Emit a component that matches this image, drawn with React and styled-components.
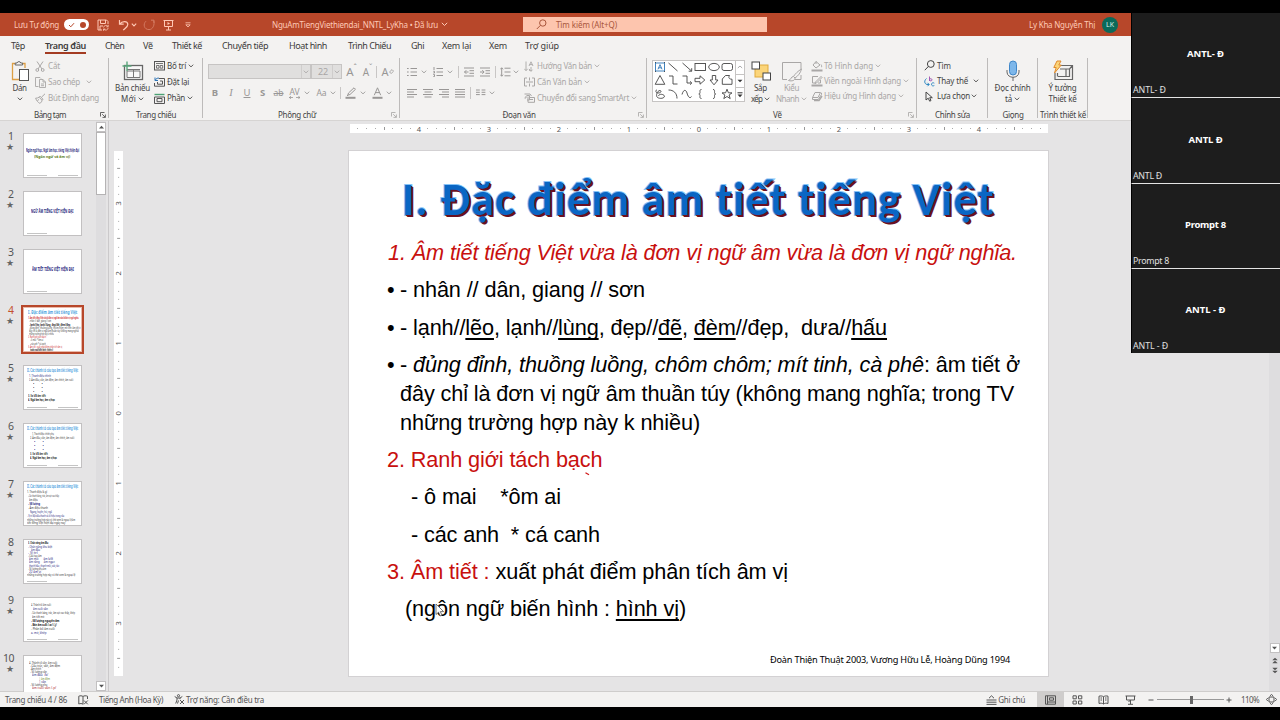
import React, { useLayoutEffect, useRef } from 'react'
import styled, { createGlobalStyle } from 'styled-components'

// Label that spreads its letters so it takes exactly `w` pixels,
// or narrows the glyphs themselves when `squeeze` is set
function Fit({ w, squeeze, children, ...rest }) {
    const ref = useRef(null)
    useLayoutEffect(() => {
        const el = ref.current
        el.style.letterSpacing = '0px'
        const natural = el.offsetWidth
        if (squeeze) {
            el.style.transform = `scaleX(${w / natural})`
            el.style.marginRight = w - natural + 'px'
        } else {
            el.style.letterSpacing = (w - el.getBoundingClientRect().width) / el.textContent.length + 'px'
        }
    }, [w, squeeze, children])
    return <FitText ref={ref} {...rest}>{children}</FitText>
}

const Chevron = ({ light }) => (
    <svg width="6" height="4" viewBox="0 0 6 4" fill="none" stroke="currentColor" strokeWidth={light ? 0.9 : 1.1}>
        <path d="M0.8 0.7L3 2.9L5.2 0.7" />
    </svg>
)

const Icon = ({ w = 12, h = 12, children, ...rest }) => (
    <svg width={w} height={h} viewBox={`0 0 ${w} ${h}`} fill="none" stroke="currentColor" strokeWidth="1" {...rest}>
        {children}
    </svg>
)

const tabs = [
    ['Tệp', 14, 11], ['Trang đầu', 41, 20], ['Chèn', 19, 19], ['Vẽ', 10, 19], ['Thiết kế', 30, 19],
    ['Chuyển tiếp', 46, 20], ['Hoạt hình', 38, 21], ['Trình Chiếu', 43, 21], ['Ghi', 13, 20],
    ['Xem lại', 29, 18], ['Xem', 18, 18], ['Trợ giúp', 34, 18],
]

function TitleBar() {
    return (
        <TitleRow>
            <QuickAccess>
                <Fit w={45}>Lưu Tự động</Fit>
                <Toggle>
                    <Icon w={7} h={6} stroke="#b7472a"><path d="M1 3L2.8 4.8L6 1.2" /></Icon>
                    <Knob />
                </Toggle>
                <Icon w={12} h={12}>
                    <path d="M1 1H9.5L11 2.5V5M1 1V11H5M3.5 1V4.5H8.5V1M3 11V7H6" />
                    <path d="M6.5 8.5A2.5 2.5 0 0 1 11 7.5M11.2 8.8A2.5 2.5 0 0 1 6.8 10.2M11.2 5.8V7.8H9.3M6.5 11.8V10H8.3" strokeWidth="0.8" />
                </Icon>
                <Spacer $w={9} />
                <Icon w={11} h={12}><path d="M1.5 1V5.2H5.7M1.7 5C4 1.8 9.8 1.5 9.8 5.5C9.8 8 7 9.2 5.2 11.2" strokeWidth="1.2" /></Icon>
                <Spacer $w={2} />
                <Chevron />
                <Spacer $w={6} />
                <Dim><Icon w={12} h={12}><path d="M8 1.2H11V4M10.6 1.6C12 5.5 10 10.6 6 10.6C1 10.6 -0.3 5 3 2.2" /></Icon></Dim>
                <Spacer $w={8} />
                <Icon w={11} h={12}>
                    <path d="M0.5 1.5H10.5M1.5 1.5V7.5H9.5V1.5M5.5 7.5V11M3 11H8" />
                    <path d="M4.5 3L7 4.5L4.5 6Z" fill="currentColor" stroke="none" />
                </Icon>
                <Spacer $w={11} />
                <Icon w={6} h={6}><path d="M0.5 0.8H5.5M0.8 2.8L3 5L5.2 2.8Z" strokeWidth="0.8" /></Icon>
            </QuickAccess>
            <FileName>
                <Fit w={166}>NguAmTiengViethiendai_NNTL_LyKha • Đã lưu</Fit>
                <Spacer $w={3} />
                <Icon w={7} h={5}><path d="M0.8 0.8L3.5 3.5L6.2 0.8" /></Icon>
            </FileName>
            <Search>
                <Icon w={11} h={11}><circle cx="6.8" cy="4" r="3.2" /><path d="M4.5 6.3L0.8 10" /></Icon>
                <Fit w={61}>Tìm kiếm (Alt+Q)</Fit>
            </Search>
            <User>
                <Fit w={66}>Ly Kha Nguyễn Thị</Fit>
                <Avatar>LK</Avatar>
            </User>
        </TitleRow>
    )
}

const PasteIcon = () => (
    <Icon w={20} h={22}>
        <path d="M5 3.5H2.5V19.5H9M12.5 3.5H15V8" stroke="#dd9f45" strokeWidth="1.3" />
        <path d="M5.2 5V3H7A2 2 0 0 1 10.8 3H12.6V5Z" stroke="#666" fill="#f3f2f1" />
        <rect x="9.5" y="9.5" width="9" height="11" stroke="#555" fill="#fff" />
    </Icon>
)
const CutIcon = () => <Icon w={10} h={11}><path d="M2 0.5L7 8M8 0.5L3 8" /><circle cx="2.3" cy="9" r="1.4" /><circle cx="7.7" cy="9" r="1.4" /></Icon>
const CopyIcon = () => <Icon w={11} h={11}><path d="M3.5 9.5H0.5V0.5H5L6 1.5M4.5 2.5H8L10.5 5V10.5H4.5ZM8 2.5V5H10.5M6 7H9M6 8.7H9" strokeWidth="0.9" /></Icon>
const BrushIcon = () => <Icon w={11} h={11}><path d="M10 0.8L6.5 4.2M5 3.2L8 6.2L7 7.2L4 4.2ZM4 4.2C3 5 1.8 5.2 0.6 5.2C1.5 7.5 3 9.5 4.8 10.3C6 9.8 7 8.5 7 7.2M2.5 7.5L4 6.5" /></Icon>
const NewSlideIcon = () => (
    <Icon w={22} h={21}>
        <rect x="2.5" y="4.5" width="18" height="14" stroke="#666" strokeWidth="1.3" fill="#f8f8f8" />
        <path d="M5 8.5H18M5 10V16.5H18V10ZM11.5 9V16.5" stroke="#777" />
        <path d="M5 0.5V10M0.5 5H9.5" stroke="#5aa77c" strokeWidth="1.4" />
    </Icon>
)
const LayoutIcon = () => <Icon w={11} h={10} stroke="#555"><rect x="0.5" y="0.5" width="10" height="8.5" /><path d="M2 2.5H9M2.5 4.5H5V7.2H2.5ZM6.2 4.5H8.7V7.2H6.2Z" strokeWidth="0.8" /></Icon>
const ResetIcon = () => <Icon w={11} h={10} stroke="#555"><path d="M5 1.5H10.5V9.2H0.5V6M3.5 5V7.2H8.5V4H6" /><path d="M1 0.5V3.5H4M1.2 3.3C2 1.5 3.5 0.8 5 1.2" stroke="#2e75b6" /></Icon>
const SectionIcon = () => <Icon w={11} h={11} stroke="#555"><path d="M0.5 1.5H10.5" stroke="#4ba173" strokeWidth="1.4" /><path d="M0.5 4V10.5H10.5V4ZM3 5.5H8V8.7H3Z" /></Icon>
const Launcher = () => <Icon w={6} h={6} strokeWidth="0.8"><path d="M0.5 4.5V0.5H4.5M2.2 2.2L5.2 5.2M5.4 2.5V5.4H2.5" /></Icon>

const lines = {
    left: 'M0 1.5H10M0 4H7M0 6.5H10M0 9H7',
    center: 'M0 1.5H10M1.5 4H8.5M0 6.5H10M1.5 9H8.5',
    right: 'M0 1.5H10M3 4H10M0 6.5H10M3 9H10',
    justify: 'M0 1.5H10M0 4H10M0 6.5H10M0 9H10',
    bullets: 'M3.5 1.5H10M3.5 5H10M3.5 8.5H10M0 1.5H1.7M0 5H1.7M0 8.5H1.7',
    numbers: 'M3.5 1.5H10M3.5 5H10M3.5 8.5H10M1 0V3M0.3 4.3H1.5V6H0.3M0.3 7.5H1.5V9.6H0.3',
    outdent: 'M0 1H10M5.5 3.7H10M5.5 6.3H10M0 9H10M4.5 5H0.5M2.3 3.2L0.5 5L2.3 6.8',
    indent: 'M0 1H10M5.5 3.7H10M5.5 6.3H10M0 9H10M0 5H4M2.3 3.2L4.1 5L2.3 6.8',
    spacing: 'M4.5 1.2H10.5M4.5 5H10.5M4.5 8.8H10.5M1.7 0.8V9.2M0.3 2.3L1.7 0.8L3.1 2.3M0.3 7.7L1.7 9.2L3.1 7.7',
    columns: 'M0 2H3.8M0 4.3H3.8M0 6.6H3.8M5.6 2H9.4M5.6 4.3H9.4M5.6 6.6H9.4',
}
const LineIcon = ({ kind }) => <Icon w={11} h={10}><path d={lines[kind]} /></Icon>

const shapes = [
    <g stroke="#2e75b6"><rect x="1.5" y="2" width="9" height="8" /><path d="M4 8.3L6 3.6L8 8.3M4.6 6.8H7.4" /><path d="M1 1.5H2M10 1.5H11M1 10.5H2M10 10.5H11" stroke="#444" /></g>,
    <path d="M1.5 2L10.5 10" />,
    <path d="M1.5 2L10.5 10M10.7 7.2V10.2H7.7" />,
    <rect x="1" y="2.5" width="10.5" height="7" />,
    <ellipse cx="6" cy="6" rx="5.3" ry="3.6" />,
    <rect x="1" y="2.5" width="10.5" height="7" rx="2" />,
    <path d="M6 1.5L10.8 10.3H1.2Z" />,
    <path d="M2 2H6V10H10.5" />,
    <path d="M1.5 2H6V9H10.5M9 7.3L10.8 9L9 10.7" />,
    <path d="M1 4.3H6V1.8L10.8 6L6 10.2V7.7H1Z" />,
    <path d="M4.3 1.5H7.7V6H10L6 10.8L2 6H4.3Z" />,
    <path d="M1.3 5L4.5 1.5H8.5C7 4 8.5 5.2 11 5.2V10.3H1.3Z" />,
    <path d="M3 1.5C1 3 2 5 4 5C7 5 8 3 6 2.5C3 2.5 1.5 8 3.5 9.5C6 11 10.5 10.5 10.5 8C9.5 6 5 5.5 4.5 8" />,
    <path d="M1.5 2C6.5 2 10 5 10 10.5" />,
    <path d="M1 6.5C2.5 1 5 1.5 6 5C7 9 9 11 10.5 8.5" />,
    <path d="M7.5 1.5C5.5 1.5 6 3 6 4.5C6 5.5 5.5 6 4.8 6C5.5 6 6 6.5 6 7.5C6 9 5.5 10.5 7.5 10.5" />,
    <path d="M5 1.5C7 1.5 6.5 3 6.5 4.5C6.5 5.5 7 6 7.7 6C7 6 6.5 6.5 6.5 7.5C6.5 9 7 10.5 5 10.5" />,
    <path d="M6 1.2L7.4 4.8L11 4.9L8.1 7L9.2 10.6L6 8.5L2.8 10.6L3.9 7L1 4.9L4.6 4.8Z" />,
]

const ArrangeIcon = () => (
    <Icon w={20} h={20}>
        <rect x="4" y="4" width="13" height="12" fill="#fbd57a" stroke="#e0a93c" />
        <rect x="1" y="1" width="7.5" height="7" fill="#fff" stroke="#444" />
        <rect x="12" y="12" width="7.5" height="7" fill="#fff" stroke="#444" />
    </Icon>
)
const StylesIcon = () => (
    <Icon w={22} h={21}>
        <path d="M6 18.5H1.5V1.5H20V8M14 18.5H20V14" />
        <path d="M20.5 8C17 10 14 13 12.5 15.5L14 17C17 15 19.5 12 20.5 8ZM12.3 15.5C10 15.5 10.5 18.5 7.5 19.5C11 20.5 14 19.5 14 17" />
    </Icon>
)
const FillIcon = () => <Icon w={12} h={12}><path d="M5 1.5L9 5L5 8L2 5ZM5 1.5V4M10 4.5C11 6 10.8 7 10 7.2" /><path d="M0.5 10.5H11.5" strokeWidth="2" /></Icon>
const OutlineIcon = () => <Icon w={12} h={12}><path d="M7 1.5H1.5V8H4M10.5 1L4.5 7L4 8.5L5.5 8L11.5 2M9.5 5V8H7" /><path d="M0.5 10.5H11.5" strokeWidth="2" /></Icon>
const EffectIcon = () => <Icon w={12} h={11}><path d="M4 1.5H9.5L7 6.5H1.5ZM1.5 6.5V8.5H7.2L10.5 3.5V1.8" /><path d="M3 9.5H8L11 5" strokeWidth="1.5" /></Icon>
const MicIcon = () => (
    <Icon w={14} h={22}>
        <rect x="3.5" y="1" width="7" height="14" rx="3.5" fill="#7db7ea" stroke="#3f87c9" />
        <path d="M1 10V12C1 19 13 19 13 12V10M7 17V21" stroke="#666" />
    </Icon>
)
const IdeaIcon = () => (
    <Icon w={22} h={22}>
        <path d="M7 5.5H20.5V19.5H3V13M5.5 16.5V13M8 9H17.5V16.5H6M17.5 9L20 6M14 9V16.5" stroke="#666" strokeWidth="1.2" />
        <path d="M5 1H9L6.8 5H9.3L2.5 13L4.2 7.5H1.8Z" fill="#fbd57a" stroke="#e08a2c" />
    </Icon>
)

const Row = ({ icon, text, w, gap = 2, more, off }) => (
    <RowItem $off={off}>
        <RowIcon>{icon}</RowIcon>
        <Fit w={w}>{text}</Fit>
        {more && <><Spacer $w={gap} /><Chevron light /></>}
    </RowItem>
)

const Big = ({ icon, lines: [a, b], width, off }) => (
    <BigButton $w={width} $off={off}>
        <BigIcon>{icon}</BigIcon>
        <BigLine><Fit w={a[1]}>{a[0]}</Fit></BigLine>
        <BigLine>{b[0] && <Fit w={b[1]}>{b[0]}</Fit>}{b[2] && <><Spacer $w={b[0] ? 2 : 0} /><Chevron light /></>}</BigLine>
    </BigButton>
)

const Group = ({ width, label, lw, launcher, dim, children }) => (
    <GroupBox $w={width}>
        <GroupBody>{children}</GroupBody>
        <GroupFoot>
            <GroupLabel><Fit w={lw}>{label}</Fit></GroupLabel>
            {launcher && <LaunchButton $dim={dim}><Launcher /></LaunchButton>}
        </GroupFoot>
    </GroupBox>
)

function Ribbon() {
    return (
        <RibbonRow>
            <Group width={109} label="Bảng tạm" lw={32} launcher>
                <Spacer $w={4} />
                <Big width={31} icon={<PasteIcon />} lines={[['Dán', 14], ['', 0, true]]} />
                <Rows>
                    <Row off icon={<CutIcon />} text="Cắt" w={12} />
                    <Row off icon={<CopyIcon />} text="Sao chép" w={32} more gap={6} />
                    <Row off icon={<BrushIcon />} text="Bút Định dạng" w={51} />
                </Rows>
            </Group>
            <Group width={94} label="Trang chiếu" lw={40}>
                <Spacer $w={3} />
                <Big width={41} icon={<NewSlideIcon />} lines={[['Bản chiếu', 35], ['Mới', 15, true]]} />
                <Spacer $w={1} />
                <Rows>
                    <Row icon={<LayoutIcon />} text="Bố trí" w={19} more />
                    <Row icon={<ResetIcon />} text="Đặt lại" w={22} />
                    <Row icon={<SectionIcon />} text="Phần" w={18} more />
                </Rows>
            </Group>
            <Group width={197} label="Phông chữ" lw={38} launcher dim>
                <ToolRows>
                    <ToolRow>
                        <Spacer $w={5} />
                        <Combo $w={103}><ComboArrow><Chevron light /></ComboArrow></Combo>
                        <Combo $w={31}><Fit w={10}>22</Fit><Spacer $w={4} /><ComboArrow><Chevron light /></ComboArrow></Combo>
                        <Spacer $w={2} />
                        <Cell $w={15}><Glyph $s={11.5}>A</Glyph><Sup>ˆ</Sup></Cell>
                        <Cell $w={17}><Glyph $s={10}>A</Glyph><Sup>ˇ</Sup></Cell>
                        <Rule />
                        <Spacer $w={2} />
                        <Cell $w={17}><Glyph $s={11}>A</Glyph><Icon w={5} h={5}><path d="M0.5 3L3 0.6L4.6 2.2L2.2 4.5Z" strokeWidth="0.8" /></Icon></Cell>
                    </ToolRow>
                    <ToolRow>
                        <Spacer $w={4} />
                        <Cell $w={16}><Glyph $s={9.5} $bold>B</Glyph></Cell>
                        <Cell $w={16}><Glyph $s={10.5} $serif>I</Glyph></Cell>
                        <Cell $w={16}><Glyph $s={9.5} $under>U</Glyph></Cell>
                        <Cell $w={15}><Glyph $s={9.5} $bold>S</Glyph></Cell>
                        <Cell $w={17}><Glyph $s={8.5} $strike>ab</Glyph></Cell>
                        <Cell $w={15}>
                            <Stack>
                                <Glyph $s={8.5} $short>AV</Glyph>
                                <Icon w={12} h={3}><path d="M0 1.5H4M2 0.2L0.4 1.5L2 2.8M7 1.5H11M9.3 0.2L11 1.5L9.3 2.8" strokeWidth="0.8" /></Icon>
                            </Stack>
                        </Cell>
                        <Cell $w={9}><Chevron light /></Cell>
                        <Spacer $w={4} />
                        <Cell $w={13}><Glyph $s={8.5}>Aa</Glyph></Cell>
                        <Cell $w={9}><Chevron light /></Cell>
                        <Spacer $w={3} />
                        <Rule />
                        <Spacer $w={3} />
                        <Cell $w={12}><Icon w={11} h={12}><path d="M9 0.8L3.5 6L2.8 8.2L5 7.5L10.5 2.3ZM2 9L3 8" /><path d="M0.5 10.8H10.5" strokeWidth="2" /></Icon></Cell>
                        <Spacer $w={2} />
                        <Cell $w={9}><Chevron light /></Cell>
                        <Spacer $w={3} />
                        <Cell $w={14}><Icon w={11} h={12}><path d="M2.3 8.2L5.5 0.8L8.7 8.2M3.5 5.6H7.5" /><path d="M0.5 10.8H10.5" strokeWidth="2" /></Icon></Cell>
                        <Cell $w={9}><Chevron light /></Cell>
                    </ToolRow>
                </ToolRows>
            </Group>
            <Group width={247} label="Đoạn văn" lw={33} launcher dim>
                <ToolRows>
                    <ToolRow>
                        <Spacer $w={7} />
                        <Cell $w={11}><LineIcon kind="bullets" /></Cell>
                        <Cell $w={12}><Chevron light /></Cell>
                        <Spacer $w={3} />
                        <Cell $w={11}><LineIcon kind="numbers" /></Cell>
                        <Cell $w={12}><Chevron light /></Cell>
                        <Spacer $w={2} />
                        <Rule />
                        <Spacer $w={5} />
                        <Cell $w={11}><LineIcon kind="outdent" /></Cell>
                        <Spacer $w={5} />
                        <Cell $w={11}><LineIcon kind="indent" /></Cell>
                        <Spacer $w={4} />
                        <Rule />
                        <Spacer $w={4} />
                        <Cell $w={11}><LineIcon kind="spacing" /></Cell>
                        <Cell $w={10}><Chevron light /></Cell>
                    </ToolRow>
                    <ToolRow>
                        <Spacer $w={4} />
                        <Cell $w={16}><LineIcon kind="left" /></Cell>
                        <Cell $w={16}><LineIcon kind="center" /></Cell>
                        <Cell $w={16}><LineIcon kind="right" /></Cell>
                        <Cell $w={16}><LineIcon kind="justify" /></Cell>
                        <Spacer $w={2} />
                        <Rule />
                        <Spacer $w={5} />
                        <Cell $w={10}><LineIcon kind="columns" /></Cell>
                        <Cell $w={12}><Chevron light /></Cell>
                    </ToolRow>
                </ToolRows>
                <Spacer $w={3} />
                <Rows>
                    <Row off icon={<Icon w={10} h={11}><path d="M2 0.5V9.5M0.3 7.8L2 9.7L3.7 7.8M5.5 9.8V8M7 6V10.2M5.5 8.7L7 10.3L8.5 8.7M5 5L7 0.8L9 5M5.6 3.6H8.4" strokeWidth="0.9" /></Icon>} text="Hướng Văn bản" w={55} more />
                    <Row off icon={<Icon w={11} h={10}><path d="M3 1H0.5V9H3M8 1H10.5V9H8M2 5H9M5.5 0.5V3.5M5.5 6.5V9.5" /></Icon>} text="Căn Văn bản" w={45} more />
                    <Row off icon={<Icon w={11} h={10}><path d="M0.5 1H6L7.5 3M2 3V5H0.5M5.5 4.5H10.5V9.3H4V3.5M2.5 2.5H5.5V7H3M6 6.5H9" /></Icon>} text="Chuyển đổi sang SmartArt" w={92} more />
                </Rows>
            </Group>
            <Group width={270} label="Vẽ" lw={9} launcher dim>
                <Gallery>
                    <ShapeGrid>
                        {shapes.map((s, i) => <Icon key={i} w={12} h={12} stroke="#444" strokeWidth="0.9">{s}</Icon>)}
                    </ShapeGrid>
                    <GalleryNav>
                        <NavCell $off><Icon w={6} h={4}><path d="M0.8 3L3 1L5.2 3" /></Icon></NavCell>
                        <NavCell><Icon w={6} h={4}><path d="M0.5 0.7H5.5L3 3.3Z" fill="currentColor" stroke="none" /></Icon></NavCell>
                        <NavCell><Icon w={6} h={6}><path d="M0.5 0.8H5.5" /><path d="M0.5 2.5H5.5L3 5.2Z" fill="currentColor" stroke="none" /></Icon></NavCell>
                    </GalleryNav>
                </Gallery>
                <Big width={29} icon={<ArrangeIcon />} lines={[['Sắp', 13], ['xếp', 11, true]]} />
                <Big off width={33} icon={<StylesIcon />} lines={[['Kiểu', 15], ['Nhanh', 23, true]]} />
                <Spacer $w={3} />
                <Rows $tight>
                    <Row off icon={<FillIcon />} text="Tô Hình dạng" w={49} more />
                    <Row off icon={<OutlineIcon />} text="Viền ngoài Hình dạng" w={77} more />
                    <Row off icon={<EffectIcon />} text="Hiệu ứng Hình dạng" w={72} more />
                </Rows>
            </Group>
            <Group width={71} label="Chỉnh sửa" lw={35}>
                <Spacer $w={7} />
                <Rows $tight>
                    <Row icon={<Icon w={11} h={11}><circle cx="6.8" cy="4" r="3.4" /><path d="M4.4 6.4L0.8 10.2" /></Icon>} text="Tìm" w={14} />
                    <Row
                        icon={<Icon w={11} h={11}>
                            <path d="M5.5 0.5V5M5.5 3.5C6 2.3 8 2.5 8 3.8C8 5.2 6 5.3 5.5 4.2" stroke="#a45bb4" />
                            <path d="M10.3 7.2C9 6.3 7.5 7 7.5 8.3C7.5 9.8 9 10.3 10.3 9.5M2.5 2.5C0 4.5 0.2 7.8 3 8.5H5M3.5 6.8L5.2 8.5L3.5 10.2" stroke="#2e86c1" />
                        </Icon>}
                        text="Thay thế" w={31} more gap={5}
                    />
                    <Row icon={<Icon w={10} h={11}><path d="M2 1V9L4.2 7.2L5.7 10.2L7 9.5L5.7 6.7H8.3Z" /></Icon>} text="Lựa chọn" w={33} more gap={1} />
                </Rows>
            </Group>
            <Group width={50} label="Giọng" lw={21}>
                <Big width={49} icon={<MicIcon />} lines={[['Đọc chính', 36], ['tả', 7, true]]} />
            </Group>
            <Group width={50} label="Trình thiết kế" lw={46}>
                <Big width={49} icon={<IdeaIcon />} lines={[['Ý tưởng', 28], ['Thiết kế', 28]]} />
            </Group>
        </RibbonRow>
    )
}

const navy = '#1c1c7a'
const sky = '#4a9fe0'
const ink = '#333'
// head: [text, width, colour, size, top]; line: [left, text, width, colour, bold]
const thumbs = [
    { head: ['Ngôn ngữ học, Ngữ âm học, tiếng Việt hiện đại', 53, navy, 6, 14], sub: ['(Ngôn ngữ và âm vị)', 36, '#5b7a1c'], foot: true, foot2: true },
    { head: ['NGỮ ÂM TIẾNG VIỆT HIỆN ĐẠI', 42, navy, 5.8, 17], foot: true },
    { head: ['ÂM TIẾT TIẾNG VIỆT HIỆN ĐẠI', 42, navy, 5.8, 17], foot: true },
    {
        selected: true, head: ['I. Đặc điểm âm tiết tiếng Việt', 49, sky, 4.5, 2], foot2: true,
        lines: [
            [4, '1. Âm tiết tiếng Việt vừa là đơn vị ngữ âm vừa là đơn vị ngữ nghĩa.', 51, '#c22', 1],
            [5, '- nhân // dân, giang // sơn', 22, ink],
            [5, '- lạnh//lẽo, lạnh//lùng, đẹp//đẽ, đèm//đẹp', 41, '#111', 1],
            [5, '- đủng đỉnh, thuồng luồng, chôm chôm; mít tinh: âm tiết ở', 51, ink],
            [5, 'đây chỉ là đơn vị ngữ âm thuần túy (không mang nghĩa)', 50, ink],
            [5, 'những trường hợp này k nhiều', 25, ink],
            [4, '2. Ranh giới tách bạch', 18, '#c22'],
            [6, '- ô mai  *ôm ai', 13, ink],
            [6, '- các anh * cá canh', 16, ink],
            [4, '3. Âm tiết : xuất phát điểm phân tích âm vị', 34, '#c22'],
            [6, '(ngôn ngữ biến hình : hình vị)', 23, '#111', 1],
        ],
    },
    {
        head: ['II. Các thành tố cấu tạo âm tiết tiếng Việt', 51, sky, 6, 2], foot: true, foot2: true,
        lines: [[5, '1. Thanh điệu chính', 22, navy], [5, '2. Âm đầu, vần, âm đệm, âm chính, âm cuối', 44, ink], [9, '•        •', 10, ink], [9, '•        •', 10, ink], [9, '•        •', 10, ink], [4, '3. Sơ đồ âm tiết', 18, ink, 1], [4, '4. Ngữ âm học, âm vị học', 27, '#111', 1]],
    },
    {
        head: ['II. Các thành tố cấu tạo âm tiết tiếng Việt', 51, sky, 6, 2], foot: true, foot2: true,
        lines: [[8, '1. Thanh điệu chính phụ', 22, ink], [6, '2. Âm đầu, vần, âm đệm, âm chính, âm cuối', 44, ink], [10, '•        •', 10, navy], [10, '•        •', 10, navy], [10, '•        •', 10, navy], [6, '3. Sơ đồ âm tiết', 18, ink, 1], [6, '4. Ngữ âm học, âm vị học', 27, '#111', 1]],
    },
    {
        head: ['II. Các thành tố cấu tạo âm tiết tiếng Việt', 51, sky, 6, 2], foot: true, foot2: true,
        lines: [[3, '1. Thanh điệu là gì', 20, ink], [4, '- Các thanh bằng, trắc, âm vực cao thấp', 31, ink], [5, 'âm điệu', 9, ink], [4, '- Số lượng', 12, navy, 1], [4, '- Âm điệu thanh', 20, ink], [6, 'Ngang, huyền, hỏi, ngã', 22, navy], [3, '- Vị trí đặt dấu thanh và kí hiệu trong câu', 37, navy], [3, 'những trường hợp này có thể xem là ngoại lệ âm', 48, ink], [3, 'tiết tiếng Việt hiện đại ngày nay', 38, ink]],
    },
    {
        foot: true,
        lines: [[4, '3. Chức năng âm đầu', 20, '#111', 1], [4, '- Chức năng khu biệt', 24, navy], [7, 'âm đầu', 9, navy], [4, '- Vị trí', 10, navy], [4, '- Cấu tạo âm', 14, ink], [5, 'âm môi       âm lưỡi', 24, navy], [5, 'âm răng      âm ngạc', 26, navy], [5, 'thanh hầu, thanh môi, xát, tắc', 30, navy], [4, '- Số lượng phụ âm', 18, ink], [5, '22 âm vị', 12, navy], [3, 'những trường hợp này có thể xem là ngoại lệ', 48, ink]],
    },
    {
        foot: true, foot2: true,
        lines: [[0, '', 0, ink], [7, '4. Thành tố âm cuối', 20, ink], [9, 'âm cuối vần', 15, navy], [7, '- Các thanh bằng, trắc, âm vực cao thấp, khép', 44, ink], [8, 'âm tiết mở', 12, ink], [7, '- Số lượng nguyên âm', 28, '#111', 1], [7, '- Bán âm cuối /-w/ /-j/', 26, '#111', 1], [7, '- Phân bố âm cuối', 24, ink], [7, 'a. mở, khép', 15, navy]],
    },
    {
        foot2: true,
        lines: [[0, '', 0, ink], [5, '4. Thành tố vần, âm cuối', 28, ink], [6, '- Cấu trúc, vần, âm đệm', 30, ink], [6, '- Âm chính', 11, ink], [6, '- Số lượng vần', 17, ink], [8, 'âm đầu  /b/', 16, navy], [15, '| âm đệm', 11, '#6b8a2c'], [15, '| vần', 7, navy], [6, '- Số lượng phụ', 17, ink], [8, 'âm cuối vần /-p/', 24, '#a22']],
    },
]

function Thumbs() {
    return (
        <ThumbPane>
            <ThumbList>
                {thumbs.map((t, i) => (
                    <ThumbItem key={i}>
                        <ThumbNo $on={t.selected}><Fit w={i === 9 ? 11 : 6}>{i + 1}</Fit><Star>★</Star></ThumbNo>
                        <ThumbCard $on={t.selected}>
                            {t.head && <ThumbHead $c={t.head[2]} $s={t.head[3]} $top={t.head[4]}><Fit squeeze w={t.head[1]}>{t.head[0]}</Fit></ThumbHead>}
                            {t.sub && <ThumbHead $c={t.sub[2]} $s={3.5} $top={1}><Fit squeeze w={t.sub[1]}>{t.sub[0]}</Fit></ThumbHead>}
                            <ThumbLines $dense={t.lines && t.lines.length > 9}>
                                {(t.lines || []).map((l, k) => (
                                    <ThumbLine key={k} $x={l[0]} $c={l[3]} $bold={l[4]}>{l[1] && <Fit squeeze w={l[2]}>{l[1]}</Fit>}</ThumbLine>
                                ))}
                            </ThumbLines>
                            <ThumbFoot><FootDash $on={t.foot} /><FootDash $on={t.foot2} /></ThumbFoot>
                        </ThumbCard>
                    </ThumbItem>
                ))}
            </ThumbList>
            <ScrollTrack>
                <ScrollButton><Icon w={5} h={4}><path d="M0 3.5H5L2.5 0.8Z" fill="#555" stroke="none" /></Icon></ScrollButton>
                <ScrollThumb />
                <Grow />
                <ScrollButton><Icon w={5} h={4}><path d="M0 0.8H5L2.5 3.5Z" fill="#555" stroke="none" /></Icon></ScrollButton>
            </ScrollTrack>
        </ThumbPane>
    )
}

const Ruler = ({ half, vertical }) => (
    <RulerBar $v={vertical}>
        {Array.from({ length: half * 2 + 1 }, (_, i) => i - half).map((n) => (
            <Tick key={n} $v={vertical} $mid={n % 4 === 0}>
                {n % 8 === 0 ? Math.abs(n / 8) : <i />}
            </Tick>
        ))}
    </RulerBar>
)

const PenMark = () => <Icon w={5} h={4} stroke="#d01818"><path d="M0.5 0.8L4 2.8" strokeWidth="1.2" /></Icon>

function Slide() {
    return (
        <SlidePage>
            <SlideTitle><Fit w={592}><PlainI>I</PlainI>. Đặc điểm âm tiết tiếng Việt</Fit></SlideTitle>
            <Body>
                <Para $x={1} $red><em><Fit w={629}>1. Âm tiết tiếng Việt vừa là đơn vị ngữ âm vừa là đơn vị ngữ nghĩa.</Fit></em></Para>
                <Para $x={0}><Bullet>•</Bullet><Fit w={245}>- nhân // dân, giang // sơn</Fit></Para>
                <Para $x={0}>
                    <Bullet>•</Bullet>
                    <Fit w={487}>- lạnh//<u>lẽo</u>, lạnh//<u>lùng</u>, đẹp//<u>đẽ</u>, <u>đèm</u>//đẹp,{'  '}dưa//<u>hấu</u></Fit>
                </Para>
                <Para $x={0}>
                    <Bullet>•</Bullet>
                    <div>
                        <Fit w={620}>- <em>đủng đỉnh, thuồng luồng, chôm chôm; mít tinh, cà phê</em>: âm tiết ở</Fit><br />
                        <Fit w={614}>đây chỉ là đơn vị ngữ âm thuần túy (không mang nghĩa; trong TV</Fit><br />
                        <Fit w={300}>những trường hợp này k nhiều)</Fit>
                    </div>
                </Para>
                <Para $x={0} $red><Fit w={215.5}>2. Ranh giới tách bạch</Fit><MarkSpot><PenMark /></MarkSpot></Para>
                <Para $x={24}><Fit w={150}>- ô mai{'    '}*ôm ai</Fit></Para>
                <Para $x={24}><Fit w={189}>- các anh{'  '}* cá canh</Fit></Para>
                <Para $x={0}><Fit w={401}><Red>3. Âm tiết :</Red> xuất phát điểm phân tích âm vị</Fit></Para>
                <Para $x={18}>
                    <Fit w={281}>(ngôn ngữ biến hình : <u>hình vị</u>)</Fit>
                    <Pointer><Icon w={10} h={14}><path d="M1 1V11.5L3.5 9.2L5.3 13L7 12.2L5.3 8.6H8.6Z" fill="#fff" stroke="#555" strokeWidth="0.8" /></Icon></Pointer>
                </Para>
            </Body>
            <Cite><Fit w={240}>Đoàn Thiện Thuật 2003, Vương Hữu Lễ, Hoàng Dũng 1994</Fit></Cite>
        </SlidePage>
    )
}

function StatusBar() {
    return (
        <StatusRow>
            <Spacer $w={5} />
            <Fit w={62}>Trang chiếu 4 / 86</Fit>
            <Spacer $w={11} />
            <Icon w={11} h={10}><path d="M5 1.5C4 0.6 2 0.6 0.8 1.2V9C2 8.4 4 8.4 5 9.2ZM5 1.5C6 0.6 8 0.6 9.5 1.2V4M6 5.5L9.8 9.3M9.8 5.5L6 9.3" /></Icon>
            <Spacer $w={10} />
            <Fit w={64}>Tiếng Anh (Hoa Kỳ)</Fit>
            <Spacer $w={11} />
            <Icon w={11} h={11}><circle cx="4.5" cy="1.7" r="1.1" /><path d="M0.7 2.5L3 4V6L1.7 9.5M8.3 2.5L6 4V5.2M4.5 6.5L3.5 9.5M6 6L10 10M10 6L6 10M3 4H6" /></Icon>
            <Spacer $w={1} />
            <Fit w={78}>Trợ năng: Cần điều tra</Fit>
            <Grow />
            <Icon w={11} h={10}><path d="M3 3.2L5.5 0.8L8 3.2M0.5 5H10.5M0.5 7.2H10.5M0.5 9.4H10.5" /></Icon>
            <Spacer $w={1} />
            <Fit w={27}>Ghi chú</Fit>
            <Spacer $w={12} />
            <ViewButton $on><Icon w={11} h={10}><path d="M0.5 0.8H10.5V9.2H0.5ZM2.5 0.8V9.2M2.5 7H10.5M4.5 2.8H8.5V5.2H4.5Z" /></Icon></ViewButton>
            <ViewButton><Icon w={11} h={10}><path d="M1 0.8H4.3V3.8H1ZM6.5 0.8H9.8V3.8H6.5ZM1 6H4.3V9H1ZM6.5 6H9.8V9H6.5Z" /></Icon></ViewButton>
            <ViewButton><Icon w={11} h={10}><path d="M5.5 1.7C4 0.8 2.5 0.8 1 1.2V8.5C2.5 8 4 8 5.5 9C7 8 8.5 8 10 8.5V1.2C8.5 0.8 7 0.8 5.5 1.7ZM5.5 1.7V9M2.5 3H4M2.5 5H4M7 3H8.5M7 5H8.5" /></Icon></ViewButton>
            <ViewButton><Icon w={11} h={10}><path d="M0.5 1H10.5M1.5 1V5H9.5V1M5.5 5V9M3 9.3H8M5.5 5L3.5 7" /></Icon></ViewButton>
            <Spacer $w={4} />
            <Icon w={6} h={6}><path d="M0.5 3H5.5" /></Icon>
            <Spacer $w={3} />
            <ZoomTrack><ZoomKnob /></ZoomTrack>
            <Spacer $w={2} />
            <Icon w={6} h={6}><path d="M0.5 3H5.5M3 0.5V5.5" /></Icon>
            <Spacer $w={9} />
            <Fit w={18}>110%</Fit>
            <Spacer $w={7} />
            <Icon w={11} h={11}><path d="M3 3H8V8H3ZM4 1.8L5.5 0.5L7 1.8M4 9.2L5.5 10.5L7 9.2M1.8 4L0.5 5.5L1.8 7M9.2 4L10.5 5.5L9.2 7" /></Icon>
            <Spacer $w={3} />
        </StatusRow>
    )
}

const people = [['ANTL- Đ', 37, 33], ['ANTL Đ', 34, 29], ['Prompt 8', 41, 36], ['ANTL - Đ', 40, 35]]

function App() {
    return (
        <Screen>
            <GlobalStyle />
            <Window>
                <TitleBar />
                <TabRow>
                    {tabs.map(([name, w, gap]) => (
                        <Tab key={name} $gap={gap} $on={name === 'Trang đầu'}><Fit w={w}>{name}</Fit></Tab>
                    ))}
                </TabRow>
                <Ribbon />
                <Workspace>
                    <Thumbs />
                    <Canvas>
                        <SideRuler><Ruler half={29} vertical /></SideRuler>
                        <Stage>
                            <Ruler half={39} />
                            <Slide />
                        </Stage>
                        <Grow />
                        <PageScroll>
                            <ScrollButton><Icon w={5} h={4}><path d="M0 0.8H5L2.5 3.5Z" fill="#555" stroke="none" /></Icon></ScrollButton>
                            <Icon w={6} h={7}><path d="M0.8 3L3 1L5.2 3ZM0.8 6L3 4L5.2 6Z" fill="#555" stroke="#555" strokeWidth="0.5" /></Icon>
                            <Icon w={6} h={7}><path d="M0.8 1L3 3L5.2 1ZM0.8 4L3 6L5.2 4Z" fill="#555" stroke="#555" strokeWidth="0.5" /></Icon>
                        </PageScroll>
                    </Canvas>
                </Workspace>
                <StatusBar />
            </Window>
            <Meeting>
                {people.map(([name, w, lw]) => (
                    <Tile key={name}>
                        <TileName><Fit w={w}>{name}</Fit></TileName>
                        <TileTag><Fit w={lw}>{name}</Fit></TileTag>
                    </Tile>
                ))}
            </Meeting>
        </Screen>
    )
}

const GlobalStyle = createGlobalStyle`
    * { box-sizing: border-box; }
    body {
        margin: 0;
        background: #000;
        overflow: hidden;
    }
    svg { display: block; flex: none; }
`;

const ui = `'Noto Sans', 'Open Sans', sans-serif`;

const FitText = styled.span`
    display: inline-block;
    white-space: pre;
    flex: none;
    transform-origin: left center;
`;

const Spacer = styled.span`
    flex: none;
    width: ${p => p.$w}px;
`;

const Grow = styled.span`
    flex: 1;
`;

const Screen = styled.div`
    position: relative;
    width: 1280px;
    height: 720px;
    padding: 13px 0;
    background: #000;
    overflow: hidden;
    font-family: ${ui};
    font-size: 8px;
    color: #444;
`;

const Window = styled.div`
    display: flex;
    flex-direction: column;
    height: 694px;
    background: #f3f2f1;
`;

const TitleRow = styled.header`
    display: flex;
    align-items: center;
    height: 23px;
    flex: none;
    background: #b7472a;
    color: #ffc9b6;
`;

const QuickAccess = styled.div`
    display: flex;
    align-items: center;
    width: 272px;
    padding-left: 14px;
`;

const Toggle = styled.span`
    display: flex;
    align-items: center;
    justify-content: space-between;
    width: 25px;
    height: 11px;
    margin: 0 8px 0 5px;
    padding: 0 3px 0 4px;
    border-radius: 6px;
    background: #fff;
`;

const Knob = styled.span`
    width: 6px;
    height: 6px;
    border-radius: 50%;
    background: #b7472a;
`;

const Dim = styled.span`
    opacity: 0.4;
`;

const FileName = styled.div`
    display: flex;
    align-items: center;
    width: 251px;
`;

const Search = styled.div`
    display: flex;
    align-items: center;
    gap: 9px;
    width: 244px;
    height: 15px;
    padding-left: 13px;
    background: #fdc5ae;
    color: #a9563c;
`;

const User = styled.div`
    display: flex;
    align-items: center;
    gap: 7px;
    margin-left: 262px;
`;

const Avatar = styled.span`
    display: flex;
    align-items: center;
    justify-content: center;
    width: 16px;
    height: 16px;
    border-radius: 50%;
    background: #0b6a5a;
    color: #d8efe9;
    font-size: 7px;
`;

const TabRow = styled.nav`
    display: flex;
    flex: none;
    height: 20px;
    font-size: 9px;
    line-height: 20px;
    color: #3c3b3a;
`;

const Tab = styled.span`
    height: 18px;
    margin-left: ${p => p.$gap}px;
    font-weight: ${p => p.$on ? 600 : 400};
    border-bottom: 2px solid ${p => p.$on ? '#a33c22' : 'transparent'};
`;

const RibbonRow = styled.div`
    display: flex;
    flex: none;
    height: 65px;
    padding-top: 1px;
    border-bottom: 1px solid #d6d4d3;
`;

const GroupBox = styled.section`
    display: flex;
    flex-direction: column;
    width: ${p => p.$w}px;
    height: 63px;
    background: linear-gradient(#bdbbba, #bdbbba) right 0 top 1px / 1px 60px no-repeat;
`;

const GroupBody = styled.div`
    display: flex;
    height: 51px;
`;

const GroupFoot = styled.div`
    display: flex;
    align-items: center;
    height: 12px;
    padding-top: 1px;
    line-height: 12px;
`;

const GroupLabel = styled.span`
    flex: 1;
    display: flex;
    justify-content: center;
`;

const LaunchButton = styled.span`
    width: 9px;
    color: ${p => p.$dim ? '#a6a4a3' : '#444'};
`;

const Rows = styled.div`
    display: flex;
    flex-direction: column;
    padding-top: 1px;
    > * { height: ${p => p.$tight ? 15.4 : 16}px; }
`;

const RowItem = styled.div`
    display: flex;
    align-items: center;
    line-height: 14px;
    color: ${p => p.$off ? '#a9a7a6' : '#444'};
`;

const RowIcon = styled.span`
    display: flex;
    align-items: center;
    width: 13px;
`;

const BigButton = styled.div`
    display: flex;
    flex-direction: column;
    align-items: center;
    width: ${p => p.$w}px;
    padding-top: 3px;
    color: ${p => p.$off ? '#a9a7a6' : '#444'};
`;

const BigIcon = styled.span`
    display: flex;
    align-items: center;
    justify-content: center;
    height: 22px;
`;

const BigLine = styled.span`
    display: flex;
    align-items: center;
    height: 11px;
    line-height: 11px;
`;

const ToolRows = styled.div`
    display: flex;
    flex-direction: column;
    padding-top: 4px;
`;

const ToolRow = styled.div`
    display: flex;
    align-items: center;
    height: 21px;
    color: #999796;
`;

const Cell = styled.span`
    display: flex;
    align-items: center;
    justify-content: center;
    flex: none;
    width: ${p => p.$w}px;
    height: 16px;
`;

const Stack = styled.span`
    display: flex;
    flex-direction: column;
    align-items: center;
`;

const Glyph = styled.span`
    font-size: ${p => p.$s}px;
    line-height: ${p => p.$short ? 9 : 14}px;
    font-weight: ${p => p.$bold ? 700 : 400};
    font-style: ${p => p.$serif ? 'italic' : 'normal'};
    font-family: ${p => p.$serif ? `'Liberation Serif', serif` : 'inherit'};
    text-decoration: ${p => p.$under ? 'underline' : p.$strike ? 'line-through' : 'none'};
`;

const Sup = styled.span`
    font-size: 8px;
    line-height: 8px;
    align-self: flex-start;
`;

const Rule = styled.span`
    flex: none;
    width: 1px;
    height: 12px;
    background: #c8c6c5;
`;

const Combo = styled.span`
    display: flex;
    align-items: center;
    justify-content: flex-end;
    width: ${p => p.$w}px;
    height: 15px;
    border: 1px solid #c6c4c3;
    background: #e0dfde;
    color: #a9a7a6;
    font-size: 9px;
    line-height: 13px;
`;

const ComboArrow = styled.span`
    display: flex;
    align-items: center;
    height: 13px;
    padding: 0 1px;
    border-left: 1px solid #cfcdcc;
`;

const Gallery = styled.div`
    display: flex;
    width: 93px;
    height: 42px;
    margin: 3px 1px 0 5px;
    border: 1px solid #c6c4c3;
    background: #fff;
`;

const ShapeGrid = styled.div`
    display: grid;
    grid-template-columns: repeat(6, 13.4px);
    grid-auto-rows: 13.3px;
    width: 82px;
    padding: 0 0 0 1px;
`;

const GalleryNav = styled.div`
    flex: 1;
    display: flex;
    flex-direction: column;
`;

const NavCell = styled.span`
    flex: 1;
    display: flex;
    align-items: center;
    justify-content: center;
    border-left: 1px solid #c6c4c3;
    color: ${p => p.$off ? '#aaa' : '#333'};
    & + & { border-top: 1px solid #c6c4c3; }
`;

const Workspace = styled.div`
    display: flex;
    height: 571px;
    flex: none;
    background: #e5e4e5;
    border-bottom: 1px solid #cfcdcc;
`;

const ThumbPane = styled.aside`
    display: flex;
    width: 109px;
    height: 571px;
    overflow: hidden;
    border-right: 1px solid #cbc9cb;
`;

const ThumbList = styled.div`
    width: 96px;
    padding-top: 12px;
`;

const ThumbItem = styled.div`
    display: flex;
    height: 58.05px;
`;

const ThumbNo = styled.span`
    display: flex;
    flex-direction: column;
    align-items: flex-end;
    width: 14px;
    margin-right: 9px;
    font-size: 10.5px;
    line-height: 7px;
    color: ${p => p.$on ? '#c4502f' : '#555'};
`;

const Star = styled.span`
    margin-top: 3px;
    font-family: 'DejaVu Sans', sans-serif;
    font-size: 9px;
    line-height: 8px;
    color: #666;
`;

const ThumbCard = styled.div`
    display: flex;
    flex-direction: column;
    width: 59px;
    height: 45px;
    overflow: hidden;
    border: 1px solid ${p => p.$on ? '#e9b9a9' : '#c2c0c1'};
    background: #fff;
    outline: ${p => p.$on ? '2px solid #b7472a' : 'none'};
`;

const ThumbHead = styled.div`
    display: flex;
    justify-content: center;
    margin-top: ${p => p.$top}px;
    font-size: ${p => p.$s}px;
    line-height: 5px;
    font-weight: 700;
    color: ${p => p.$c};
`;

const ThumbLines = styled.div`
    flex: 1;
    display: flex;
    flex-direction: column;
    padding-top: 2px;
    > * { height: ${p => p.$dense ? 3.2 : 3.9}px; }
`;

const ThumbLine = styled.div`
    display: flex;
    flex: none;
    margin-left: ${p => p.$x}px;
    font-size: 2.8px;
    line-height: 3.4px;
    font-weight: ${p => p.$bold ? 700 : 400};
    color: ${p => p.$c};
`;

const ThumbFoot = styled.div`
    display: flex;
    justify-content: space-between;
    padding: 0 3px 1px;
`;

const FootDash = styled.span`
    width: 20px;
    height: 1px;
    background: ${p => p.$on ? '#c4c4c4' : 'transparent'};
`;

const ScrollTrack = styled.div`
    display: flex;
    flex-direction: column;
    width: 10px;
    height: 570px;
    padding: 1px 0 0;
    background: #dedddf;
`;

const ScrollButton = styled.span`
    display: flex;
    align-items: center;
    justify-content: center;
    flex: none;
    width: 10px;
    height: 10px;
    border: 1px solid #c2c0c1;
    background: #fff;
`;

const ScrollThumb = styled.span`
    height: 63px;
    border: 1px solid #b5b3b4;
    background: #fff;
`;

const Canvas = styled.main`
    display: flex;
    flex: 1;
`;

const SideRuler = styled.div`
    width: 239px;
    padding: 30px 0 0 5px;
`;

const Stage = styled.div`
    width: 701px;
    padding-top: 3px;
`;

const RulerBar = styled.div`
    display: flex;
    flex-direction: ${p => p.$v ? 'column' : 'row'};
    justify-content: center;
    width: ${p => p.$v ? '9px' : '698px'};
    height: ${p => p.$v ? '525px' : '9px'};
    margin-left: ${p => p.$v ? 0 : 2}px;
    background: #fff;
`;

const Tick = styled.span`
    display: flex;
    flex: none;
    align-items: center;
    justify-content: center;
    width: ${p => p.$v ? 9 : 8.75}px;
    height: ${p => p.$v ? 8.75 : 9}px;
    font-size: 7.5px;
    line-height: 8px;
    color: #555;
    transform: ${p => p.$v ? 'rotate(-90deg)' : 'none'};
    i {
        width: 1px;
        height: ${p => p.$mid ? 3 : 1}px;
        background: ${p => p.$mid ? '#999' : '#aaa'};
    }
`;

const SlidePage = styled.article`
    width: 701px;
    height: 527px;
    margin-top: 17px;
    border: 1px solid #d3d1d3;
    background: #fff;
    color: #000;
`;

const SlideTitle = styled.h1`
    height: 88px;
    margin: 0;
    padding: 17px 0 0 53px;
    font-family: Carlito, 'Open Sans', sans-serif;
    font-size: 46.5px;
    font-weight: 700;
    line-height: 62px;
    color: #0a66c4;
    -webkit-text-stroke: 2px #86c4f8;
    paint-order: stroke fill;
    text-shadow: 1px 1px 0 #6b1020, 2px 2px 0 #6b1020;
`;

// numeral without slab ends
const PlainI = styled.span`
    font-family: Roboto, sans-serif;
    font-size: 42px;
`;

const Body = styled.div`
    height: 404px;
    padding-left: 38px;
    font-family: 'Liberation Sans', Arial, sans-serif;
    font-size: 21.7px;
    line-height: 28.8px;
    u {
        text-decoration-thickness: 1.5px;
        text-underline-offset: 3px;
        text-decoration-skip-ink: none;
    }
`;

const Para = styled.div`
    display: flex;
    position: relative;
    margin: 0 0 8.55px ${p => p.$x}px;
    color: ${p => p.$red ? '#c8100e' : '#000'};
    div { white-space: nowrap; }
`;

const Bullet = styled.span`
    width: 13px;
    flex: none;
    line-height: 28px;
`;

const Red = styled.span`
    color: #c8100e;
`;

const MarkSpot = styled.span`
    position: absolute;
    left: 198px;
    top: 26px;
`;

const Pointer = styled.span`
    position: absolute;
    left: 30px;
    top: 8px;
`;

const Cite = styled.footer`
    display: flex;
    justify-content: flex-end;
    padding: 10px 38px 0 0;
    font-size: 9.2px;
    line-height: 14px;
`;

const PageScroll = styled.div`
    display: flex;
    flex-direction: column;
    align-items: center;
    justify-content: flex-end;
    gap: 3.5px;
    width: 11px;
    padding-bottom: 17px;
    background: #dedddf;
`;

const StatusRow = styled.footer`
    display: flex;
    align-items: center;
    height: 15px;
    flex: none;
    background: #f3f2f1;
    color: #555;
`;

const ViewButton = styled.span`
    display: flex;
    align-items: center;
    justify-content: center;
    width: 26.7px;
    height: 15px;
    background: ${p => p.$on ? '#cfcdcc' : 'transparent'};
`;

const ZoomTrack = styled.span`
    display: flex;
    align-items: center;
    justify-content: center;
    width: 67px;
    height: 10px;
    background: linear-gradient(#999, #999) center / 100% 1px no-repeat;
`;

const ZoomKnob = styled.span`
    width: 3px;
    height: 8px;
    margin-left: 2px;
    background: #666;
`;

const Meeting = styled.aside`
    position: absolute;
    top: 13px;
    right: 0;
    width: 149px;
    display: flex;
    flex-direction: column;
    background: #1d1d1d;
    color: #fff;
`;

const Tile = styled.div`
    display: flex;
    flex-direction: column;
    height: 84.3px;
    border-left: 1px solid #000;
    & + & {
        border-top: 1px solid #e4e4e4;
        height: 85.3px;
    }
`;

const TileName = styled.span`
    display: flex;
    flex: 1;
    align-items: flex-end;
    justify-content: center;
    padding: 0 1px 23px 0;
    font-size: 9.5px;
    line-height: 14px;
    font-weight: 700;
`;

const TileTag = styled.span`
    padding: 0 0 0 1px;
    font-size: 8.8px;
    line-height: 13px;
    color: #e0e0e0;
`;

export default App
